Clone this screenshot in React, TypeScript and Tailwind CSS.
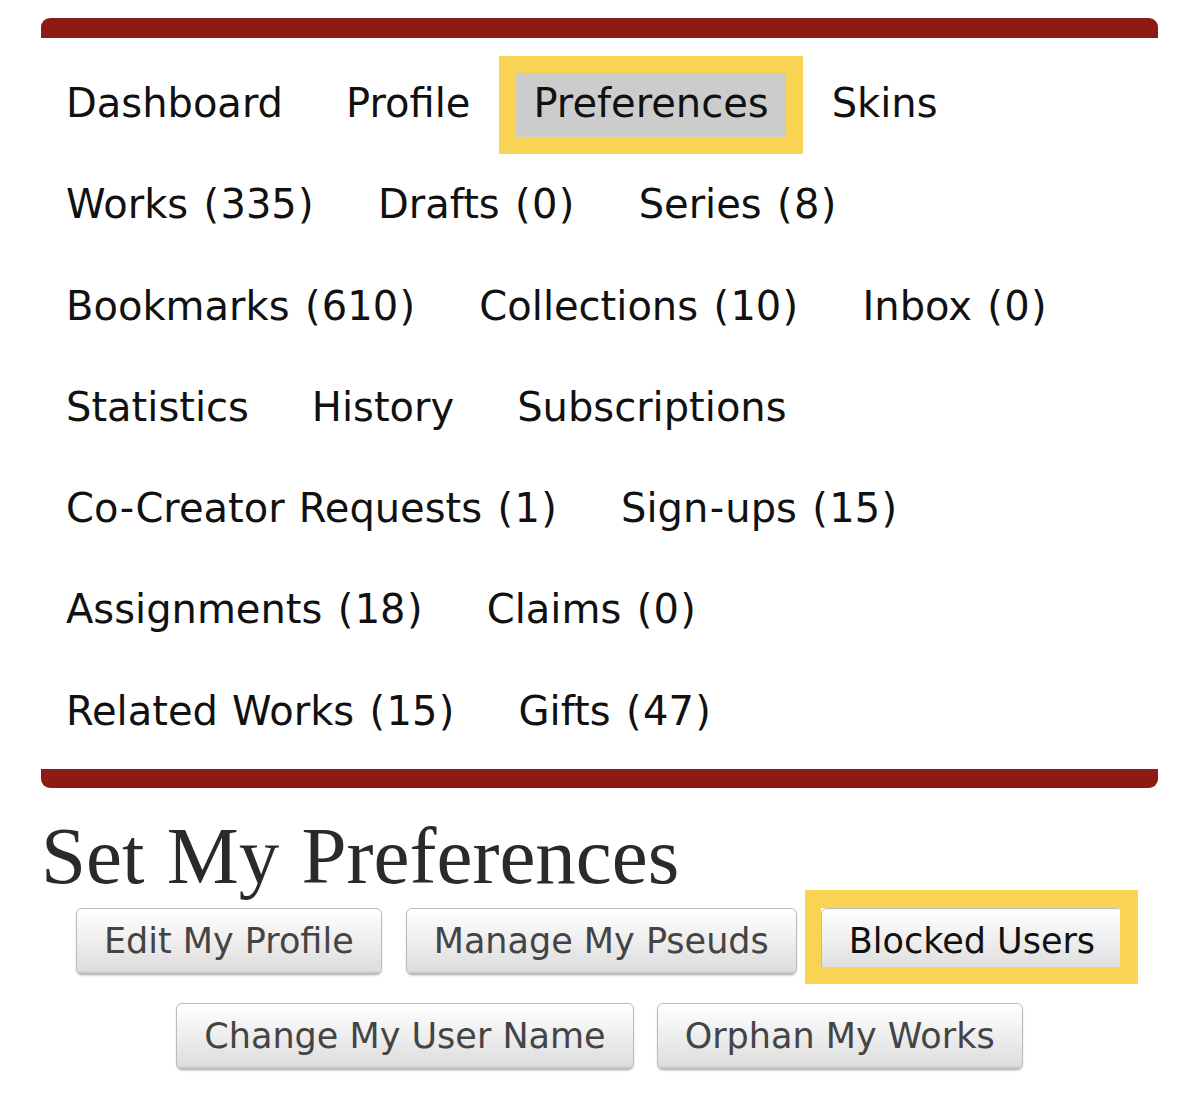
const NAV_ROWS: string[][] = [
  ["Dashboard", "Profile", "Preferences", "Skins"],
  ["Works (335)", "Drafts (0)", "Series (8)"],
  ["Bookmarks (610)", "Collections (10)", "Inbox (0)"],
  ["Statistics", "History", "Subscriptions"],
  ["Co-Creator Requests (1)", "Sign-ups (15)"],
  ["Assignments (18)", "Claims (0)"],
  ["Related Works (15)", "Gifts (47)"],
];

const ACTIVE = "Preferences";

// Verdana-ish spacing on parens and hyphens
function NavLabel({ text }: { text: string }) {
  return (
    <>
      {text.split(/([()-])/).map((part, i) =>
        part === "(" || part === ")" || part === "-" ? (
          <span key={i} className="px-[1.3px]">
            {part}
          </span>
        ) : (
          part
        ),
      )}
    </>
  );
}

function PrefButton({ label, dark }: { label: string; dark?: boolean }) {
  return (
    <button
      className={`rounded-[6px] border border-[#bbb] bg-[linear-gradient(#fff_2%,#ddd_95%,#bbb_100%)] px-[27px] py-[12px] text-[35px] leading-[41px] shadow-[0_1px_2px_rgba(0,0,0,0.15)] ${
        dark ? "text-[#111]" : "text-[#444]"
      }`}
    >
      {label}
    </button>
  );
}

export default function App() {
  return (
    <div className="min-h-[1107px] bg-white pl-[41px] pr-[42px] pt-[18px] font-['DejaVu_Sans','Noto_Sans',sans-serif]">
      <div className="h-[20px] rounded-t-[9px] bg-[#8d1b12]" />

      <nav className="flex flex-col gap-y-[37.3px] pl-[8px] pt-[35px] pb-[24px] text-[#111]">
        {NAV_ROWS.map((row, i) => (
          <div key={i} className="flex gap-x-[29px]">
            {row.map((item) => (
              <span
                key={item}
                className={`px-[17px] pt-[6px] pb-[10px] text-[40px] leading-[48px] whitespace-nowrap [word-spacing:1.4px] ${
                  item === ACTIVE
                    ? "bg-[#cccccc] outline-solid outline-[17px] outline-[#f8d354]"
                    : ""
                }`}
              >
                <NavLabel text={item} />
              </span>
            ))}
          </div>
        ))}
      </nav>

      <div className="h-[19px] rounded-b-[9px] bg-[#8d1b12]" />

      <h2 className="mt-[28px] font-['Liberation_Serif','DejaVu_Serif',serif] text-[81px] leading-[81px] text-[#2a2a2a] [word-spacing:2px]">
        Set My Preferences
      </h2>

      <div className="mt-[11px] flex flex-col items-center gap-y-[28px]">
        <div className="flex justify-center gap-x-[24px]">
          <PrefButton label="Edit My Profile" />
          <PrefButton label="Manage My Pseuds" />
          <div className="relative">
            <PrefButton label="Blocked Users" dark />
            <span className="pointer-events-none absolute -left-[16px] -top-[18px] h-[94px] w-[333px] border-solid border-[#f8d354] border-l-[16px] border-t-[18px] border-r-[18px] border-b-[17px]" />
          </div>
        </div>
        <div className="flex justify-center gap-x-[23px]">
          <PrefButton label="Change My User Name" />
          <PrefButton label="Orphan My Works" />
        </div>
      </div>
    </div>
  );
}
